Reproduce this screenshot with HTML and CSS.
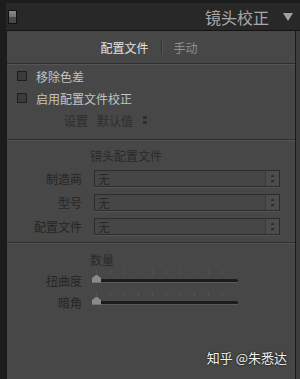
FILE: index.html
```html
<!DOCTYPE html>
<html lang="zh-CN">
<head>
    <meta charset="UTF-8">
    <meta name="viewport" content="width=device-width, initial-scale=1.0">
    <title>镜头校正</title>
    <link rel="stylesheet" href="styles.css">
</head>
<body>
    <div class="shell">
        <div class="head">
            <span class="toggle"></span>
            <h1 class="title">镜头校正</h1>
            <span class="caret"></span>
        </div>

        <div class="panel">
            <div class="tabs">
                <span class="tab active">配置文件</span>
                <span class="tab-sep"></span>
                <span class="tab">手动</span>
            </div>

            <div class="group checks">
                <label class="check-row"><span class="box"></span>移除色差</label>
                <label class="check-row"><span class="box"></span>启用配置文件校正</label>
                <div class="setting-row">
                    <span>设置</span>
                    <span class="setting-value">默认值</span>
                    <span class="updown"></span>
                </div>
            </div>

            <div class="group lens">
                <div class="group-title">镜头配置文件</div>
                <div class="field-row">
                    <span class="field-label">制造商</span>
                    <div class="select"><span>无</span><span class="select-arrow"></span></div>
                </div>
                <div class="field-row">
                    <span class="field-label">型号</span>
                    <div class="select"><span>无</span><span class="select-arrow"></span></div>
                </div>
                <div class="field-row">
                    <span class="field-label">配置文件</span>
                    <div class="select"><span>无</span><span class="select-arrow"></span></div>
                </div>
            </div>

            <div class="group amount">
                <div class="group-title">数量</div>
                <div class="slider-row">
                    <span class="field-label">扭曲度</span>
                    <div class="slider"><span class="thumb"></span></div>
                </div>
                <div class="slider-row">
                    <span class="field-label">暗角</span>
                    <div class="slider"><span class="thumb"></span></div>
                </div>
            </div>

            <div class="watermark">知乎 @朱悉达</div>
        </div>
    </div>
</body>
</html>
```

FILE: styles.css
```css
body {
    margin: 0;
    background: #1c1c1c;
    font-family: "Noto Sans CJK SC", "Noto Sans", sans-serif;
    font-size: 12px;
    color: #bdbdbd;
}
.shell {
    width: 300px;
    height: 379px;
    padding-top: 3px;
    box-sizing: border-box;
    display: flex;
    flex-direction: column;
    overflow: hidden;
}
.head {
    height: 27px;
    margin-left: 6px;
    padding: 0 7px 0 2px;
    background: #282828;
    display: flex;
    align-items: center;
    border-bottom: 1px solid #141414;
}
.toggle {
    width: 7px;
    height: 12px;
    border: 1px solid #111;
    background: linear-gradient(#8c8c8c 0, #6e6e6e 50%, #4a4a4a 50%, #4a4a4a 100%);
}
.title {
    margin: 0 14px 0 auto;
    font-size: 16px;
    font-weight: normal;
    color: #a8a8a8;
    line-height: 1;
}
.caret {
    width: 0;
    height: 0;
    border-left: 5px solid transparent;
    border-right: 5px solid transparent;
    border-top: 8px solid #a0a0a0;
    margin-top: 1px;
}
.panel {
    position: relative;
    flex: 1;
    margin-left: 6px;
    margin-right: 4px;
    background: #474747;
    border-left: 1px solid #1a1a1a;
    border-right: 1px solid #1a1a1a;
    box-shadow: 4px 0 0 #3c3c3c;
}
.tabs {
    height: 32px;
    display: flex;
    align-items: center;
    justify-content: center;
    gap: 12px;
    padding-right: 4px;
}
.tab {
    color: #8e8e8e;
}
.tab.active {
    color: #e2e2e2;
}
.tab-sep {
    width: 1px;
    height: 14px;
    background: #333;
    box-shadow: 1px 0 0 #555;
}
.group {
    border-top: 1px solid #2e2e2e;
    box-shadow: inset 0 1px 0 #545454;
}
.checks {
    padding: 1px 0 8px 10px;
}
.check-row {
    height: 22px;
    display: flex;
    align-items: center;
    gap: 9px;
    color: #c4c4c4;
}
.box {
    width: 8px;
    height: 8px;
    border: 1px solid #1e1e1e;
    background: #3b3b3b;
}
.setting-row {
    height: 22px;
    display: flex;
    align-items: center;
    padding-left: 47px;
    color: #2e2e2e;
}
.setting-value {
    margin-left: 9px;
}
.updown {
    width: 4px;
    height: 8px;
    margin-left: 10px;
    background: linear-gradient(#2e2e2e 0 3px, transparent 3px 5px, #2e2e2e 5px);
}
.lens {
    padding: 7px 15px 7px 0;
}
.group-title {
    height: 18px;
    line-height: 18px;
    padding-left: 83px;
    color: #2a2a2a;
}
.lens .group-title {
    margin-bottom: 5px;
}
.field-row {
    display: flex;
    align-items: center;
    margin-bottom: 7px;
}
.field-row:last-child {
    margin-bottom: 0;
}
.field-label {
    width: 75px;
    text-align: right;
    color: #262626;
    flex-shrink: 0;
}
.select {
    flex: 1;
    height: 15px;
    margin-left: 12px;
    border: 1px solid #2c2c2c;
    box-shadow: 0 1px 0 #555;
    background: #464646;
    display: flex;
    align-items: center;
    color: #2a2a2a;
    padding-left: 3px;
}
.select-arrow {
    margin-left: auto;
    width: 13px;
    height: 15px;
    border-left: 1px solid #383838;
    background:
        linear-gradient(#2e2e2e, #2e2e2e) 5px 4px / 3px 2px no-repeat,
        linear-gradient(#2e2e2e, #2e2e2e) 5px 9px / 3px 2px no-repeat,
        #4c4c4c;
}
.amount {
    padding: 8px 0 0 0;
}
.slider-row {
    height: 22px;
    display: flex;
    align-items: center;
}
.slider {
    position: relative;
    width: 146px;
    height: 3px;
    margin-left: 10px;
    background: #1c1c1c;
    border-radius: 2px;
    box-shadow: 0 1px 0 #5a5a5a;
}
.slider::before {
    content: "";
    position: absolute;
    left: 4px;
    right: 4px;
    top: -9px;
    height: 4px;
    background: repeating-linear-gradient(90deg, #525252 0 1px, transparent 1px 14px);
}
.thumb {
    position: absolute;
    left: 0;
    top: -4px;
    width: 9px;
    height: 8px;
    background: #8a8a8a;
    clip-path: polygon(50% 0, 100% 45%, 100% 100%, 0 100%, 0 45%);
}
.watermark {
    position: absolute;
    right: 8px;
    bottom: 12px;
    font-size: 13px;
    color: #f0f0f0;
    text-shadow: 0 0 2px #000;
}
```
